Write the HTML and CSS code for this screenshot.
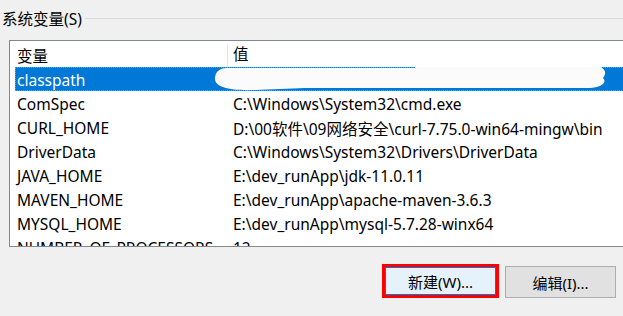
FILE: index.html
```html
<!DOCTYPE html>
<html lang="zh-CN">
<head>
    <meta charset="UTF-8">
    <title>系统变量</title>
    <link rel="stylesheet" href="styles.css">
</head>
<body>
    <div class="group-title">
        <span>系统变量(S)</span>
        <div class="group-line"></div>
    </div>
    <div class="list-box">
        <div class="list-head">
            <div class="col-name">变量</div>
            <div class="col-value">值</div>
        </div>
        <div class="row selected">
            <div class="col-name">classpath</div>
            <div class="col-value"></div>
            <svg class="scribble" viewBox="0 0 620 24" width="620" height="24">
                <path d="M200,12 C200,5 204,1 212,1 L400,1 L400,0 L586,0 C590,3 592,6 588,11 C592,15 588,20 576,21 L290,21 L240,23 C215,24 200,20 200,12 Z" fill="#fbfbfb"/>
            </svg>
        </div>
        <div class="row">
            <div class="col-name">ComSpec</div>
            <div class="col-value">C:\Windows\System32\cmd.exe</div>
        </div>
        <div class="row">
            <div class="col-name">CURL_HOME</div>
            <div class="col-value">D:\00软件\09网络安全\curl-7.75.0-win64-mingw\bin</div>
        </div>
        <div class="row">
            <div class="col-name">DriverData</div>
            <div class="col-value">C:\Windows\System32\Drivers\DriverData</div>
        </div>
        <div class="row">
            <div class="col-name">JAVA_HOME</div>
            <div class="col-value">E:\dev_runApp\jdk-11.0.11</div>
        </div>
        <div class="row">
            <div class="col-name">MAVEN_HOME</div>
            <div class="col-value">E:\dev_runApp\apache-maven-3.6.3</div>
        </div>
        <div class="row">
            <div class="col-name">MYSQL_HOME</div>
            <div class="col-value">E:\dev_runApp\mysql-5.7.28-winx64</div>
        </div>
        <div class="row">
            <div class="col-name">NUMBER_OF_PROCESSORS</div>
            <div class="col-value">12</div>
        </div>
    </div>
    <div class="actions">
        <div class="mark">
            <button class="btn btn-default">新建(W)...</button>
        </div>
        <button class="btn">编辑(I)...</button>
    </div>
</body>
</html>
```

FILE: styles.css
```css
* {
    margin: 0;
    padding: 0;
    box-sizing: border-box;
}
body {
    width: 623px;
    height: 316px;
    overflow: hidden;
    background: #f0f0f0;
    font-family: 'Noto Sans', 'Noto Sans CJK SC', sans-serif;
    font-size: 15.5px;
    color: #000;
}
.group-title {
    display: flex;
    align-items: center;
    height: 36px;
    padding-left: 2px;
}
.group-line {
    flex: 1;
    height: 1px;
    background: #dcdcdc;
    margin-left: 3px;
    margin-top: 1px;
}
.list-box {
    margin: 4px 0 0 9px;
    width: 640px;
    height: 207px;
    background: #fff;
    border: 1px solid #828790;
    overflow: hidden;
}
.list-head, .row {
    display: flex;
    align-items: center;
    margin-left: 5px;
    white-space: nowrap;
}
.list-head {
    height: 26px;
    padding-top: 2px;
}
.row {
    height: 24px;
    padding-top: 2px;
    position: relative;
}
.col-name {
    width: 212px;
    padding-left: 2px;
    flex-shrink: 0;
}
.col-value {
    padding-left: 6px;
}
.list-head .col-value {
    border-left: 1px solid #e5e5e5;
    height: 22px;
    line-height: 20px;
    padding-left: 5px;
}
.selected {
    background: #0078d7;
    color: #fff;
    outline: 1px dotted #d9883b;
    outline-offset: -1px;
}
.scribble {
    position: absolute;
    left: 0;
    top: 0;
}
.actions {
    display: flex;
    justify-content: flex-end;
    align-items: flex-end;
    gap: 6px;
    margin-top: 17px;
    padding-right: 7px;
}
.mark {
    border: 3px solid #ff0000;
    width: 117px;
    height: 34px;
    display: flex;
}
.btn {
    width: 111px;
    height: 32px;
    background: #e1e1e1;
    border: 1px solid #adadad;
    font-family: inherit;
    font-size: 15px;
    color: #000;
}
.btn-default {
    width: 100%;
    height: 100%;
    background: #e5f1fb;
    border: 1px solid #0078d7;
}
```
